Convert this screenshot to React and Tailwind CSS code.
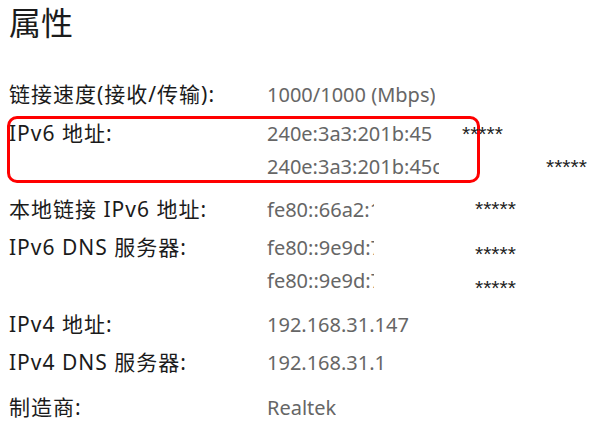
import React from "react";

// Network adapter properties panel (Windows settings style)
const rows = [
  { label: "链接速度(接收/传输):", values: [{ text: "1000/1000 (Mbps)", w: "" }], mt: "mt-[35px]" },
  {
    label: "IPv6 地址:",
    values: [
      { text: "240e:3a3:201b:45", w: "" },
      { text: "240e:3a3:201b:45c0:8d2e", w: "w-[172px]" },
    ],
    mt: "mt-[6px]",
    boxed: true,
    stars: [
      { pos: "left-[453px] top-[6px]" },
      { pos: "left-[537px] top-[39px]" },
    ],
  },
  {
    label: "本地链接 IPv6 地址:",
    values: [{ text: "fe80::66a2:1f3c", w: "w-[107px]" }],
    mt: "mt-[10px]",
    stars: [{ pos: "left-[466px] top-[5px]" }],
  },
  {
    label: "IPv6 DNS 服务器:",
    values: [
      { text: "fe80::9e9d:7e1a", w: "w-[107px]" },
      { text: "fe80::9e9d:7e1a", w: "w-[107px]" },
    ],
    mt: "mt-[5px]",
    stars: [
      { pos: "left-[466px] top-[12px]" },
      { pos: "left-[466px] top-[46px]" },
    ],
  },
  { label: "IPv4 地址:", values: [{ text: "192.168.31.147", w: "" }], mt: "mt-[11px]" },
  { label: "IPv4 DNS 服务器:", values: [{ text: "192.168.31.1", w: "" }], mt: "mt-[5px]" },
  { label: "制造商:", values: [{ text: "Realtek", w: "" }], mt: "mt-[12px]" },
];

const PropertyRow = ({ row }) => {
  return (
    <div className={`relative flex ${row.mt}`}>
      <div className="w-[258px] shrink-0 text-[21px] leading-[33px] tracking-[1px] text-[#1b1b1b]">
        {row.label}
      </div>
      <div className="flex flex-col">
        {row.values.map((v, i) => (
          <div
            key={i}
            className={`overflow-hidden whitespace-nowrap text-[20px] leading-[33px] text-[#666666] ${v.w}`}
          >
            {v.text}
          </div>
        ))}
      </div>
      {/* red annotation box drawn over the row */}
      {row.boxed && (
        <div className="pointer-events-none absolute -left-[2px] -top-[1px] h-[67px] w-[473px] rounded-[10px] border-[3px] border-[#ff0000]" />
      )}
      {/* redacted parts */}
      {row.stars &&
        row.stars.map((s, i) => (
          <span
            key={i}
            className={`absolute ${s.pos} font-['Liberation_Sans',sans-serif] text-[21px] leading-none text-[#222222]`}
          >
            *****
          </span>
        ))}
    </div>
  );
};

const App = () => {
  return (
    <div className="h-[436px] w-[600px] overflow-hidden bg-white pl-[9px] font-['Noto_Sans','Noto_Sans_CJK_SC',sans-serif]">
      <h1 className="pt-[3px] text-[32px] leading-[40px] text-[#1b1b1b]">属性</h1>
      <div className="flex flex-col">
        {rows.map((row, i) => (
          <PropertyRow key={i} row={row} />
        ))}
      </div>
    </div>
  );
};

export default App;
